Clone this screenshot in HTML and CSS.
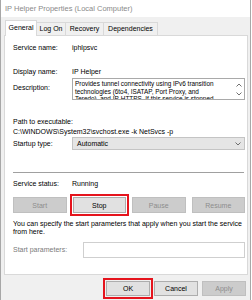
FILE: index.html
```html
<!DOCTYPE html>
<html lang="en">
<head>
  <meta charset="UTF-8" />
  <title>IP Helper Properties (Local Computer)</title>
  <link rel="stylesheet" href="styles.css">
</head>
<body>
  <div class="window">
    <div class="titlebar">IP Helper Properties (Local Computer)</div>

    <div class="dialog">
      <!-- Tabs -->
      <div class="tabs">
        <div class="tab tab-general active">General</div>
        <div class="tab tab-logon">Log On</div>
        <div class="tab tab-recovery">Recovery</div>
        <div class="tab tab-deps">Dependencies</div>
      </div>

      <!-- General page -->
      <div class="panel">
        <div class="row row-name">
          <span class="label">Service name:</span>
          <span class="value">iphlpsvc</span>
        </div>
        <div class="row row-display">
          <span class="label">Display name:</span>
          <span class="value">IP Helper</span>
        </div>
        <div class="row row-desc">
          <span class="label">Description:</span>
          <div class="desc-box">
            <div class="desc-text">Provides tunnel connectivity using IPv6 transition technologies (6to4, ISATAP, Port Proxy, and Teredo), and IP-HTTPS. If this service is stopped, the computer will not have the enhanced connectivity benefits that these technologies offer.</div>
            <div class="desc-scroll">
              <svg width="6" height="4" viewBox="0 0 6 4"><path d="M0.5 3.5 L3 1 L5.5 3.5" fill="none" stroke="#606060" stroke-width="0.9"/></svg>
              <svg width="6" height="4" viewBox="0 0 6 4"><path d="M0.5 0.5 L3 3 L5.5 0.5" fill="none" stroke="#606060" stroke-width="0.9"/></svg>
            </div>
          </div>
        </div>
        <div class="row row-pathlabel">Path to executable:</div>
        <div class="row row-path">C:\WINDOWS\System32\svchost.exe -k NetSvcs -p</div>
        <div class="row row-startup">
          <span class="label">Startup type:</span>
          <div class="combo">
            <span>Automatic</span>
            <svg width="6" height="4" viewBox="0 0 6 4"><path d="M0.5 0.5 L3 3 L5.5 0.5" fill="none" stroke="#606060" stroke-width="0.9"/></svg>
          </div>
        </div>

        <div class="separator"></div>

        <div class="row row-status">
          <span class="label">Service status:</span>
          <span class="value">Running</span>
        </div>
        <div class="service-buttons">
          <button class="btn" disabled>Start</button>
          <button class="btn highlight">Stop</button>
          <button class="btn" disabled>Pause</button>
          <button class="btn" disabled>Resume</button>
        </div>

        <p class="hint">You can specify the start parameters that apply when you start the service<br>from here.</p>

        <div class="row row-params">
          <span class="label disabled">Start parameters:</span>
          <div class="input"></div>
        </div>
      </div>

      <!-- Dialog buttons -->
      <div class="footer">
        <button class="btn btn-dialog highlight">OK</button>
        <button class="btn btn-dialog">Cancel</button>
        <button class="btn btn-dialog" disabled>Apply</button>
      </div>
    </div>
  </div>
</body>
</html>
```

FILE: styles.css
```css
/* Variables & Reset */
:root {
  --face: #f0f0f0;
  --border: #d9d9d9;
  --btn: #e1e1e1;
  --btn-border: #adadad;
  --disabled-bg: #cccccc;
  --disabled-text: #8d8d8d;
  --red: #e5141d;
}
* { margin: 0; padding: 0; box-sizing: border-box; }
body { font-family: 'Liberation Sans', Arial, sans-serif; font-size: 7px; color: #000; background: #fff; }

/* Window */
.window { width: 251px; height: 300px; border-left: 1px solid #a7a7a7; border-right: 1px solid #a7a7a7; background: var(--face); overflow: hidden; }
.titlebar { height: 17px; line-height: 17px; padding-left: 4px; background: #fff; color: #8a8a8a; font-size: 7.5px; white-space: nowrap; }
.dialog { padding: 0 2px 0 3px; }

/* Tabs */
.tabs { height: 18px; display: flex; align-items: flex-end; padding-left: 1px; }
.tab { height: 13px; line-height: 12px; text-align: center; border: 1px solid var(--border); border-bottom: none; background: var(--face); margin-left: -1px; }
.tab:first-child { margin-left: 0; }
.tab.active { height: 16px; line-height: 14px; background: #fff; margin-bottom: -1px; position: relative; z-index: 1; }
.tab-general { width: 32px; }
.tab-logon { width: 30px; }
.tab-recovery { width: 39px; }
.tab-deps { width: 55px; }

/* Panel */
.panel { height: 240px; background: #fff; border: 1px solid var(--border); padding: 0 2px 0 8px; }
.row { display: flex; align-items: center; line-height: 8px; white-space: nowrap; }
.label { width: 59px; flex-shrink: 0; }
.label.disabled { width: 70px; color: #7a7a7a; }

.row-name { margin-top: 8px; }
.row-display { margin-top: 16px; }
.row-desc { margin-top: 2px; align-items: flex-start; }
.row-desc .label { padding-top: 6px; }
.desc-box { flex: 1; height: 22px; border: 1px solid #a9a9a9; display: flex; overflow: hidden; }
.desc-text { flex: 1; padding: 1px 10px 0 2px; font-size: 6.4px; line-height: 7.5px; white-space: normal; overflow: hidden; }
.desc-scroll { width: 11px; display: flex; flex-direction: column; align-items: center; justify-content: space-between; padding: 4px 0 3px; }
.desc-scroll svg { display: block; }
.row-pathlabel { margin-top: 18px; }
.row-path { margin-top: 2px; }
.row-startup { margin-top: 1px; }
.combo { flex: 1; height: 13px; background: #e5e5e5; border: 1px solid #c4c4c4; display: flex; align-items: center; justify-content: space-between; padding: 0 3px 0 4px; }

.separator { height: 1px; background: #a0a0a0; margin: 22px 1px 0 0; }

.row-status { margin-top: 7px; }

/* Buttons */
.service-buttons { display: flex; gap: 6px; margin-top: 9px; }
.service-buttons .btn { flex: 1; }
.btn { height: 16px; font-family: inherit; font-size: 7px; color: #000; background: var(--btn); border: 1px solid var(--btn-border); }
.btn:disabled { background: var(--disabled-bg); border-color: #bfbfbf; color: var(--disabled-text); }
.btn.highlight { outline: 2px solid var(--red); outline-offset: 1px; }

.hint { margin-top: 7px; line-height: 8px; white-space: nowrap; }

.row-params { margin-top: 6px; }
.input { flex: 1; height: 16px; border: 1px solid #cfcfcf; background: #fff; }

/* Footer */
.footer { display: flex; justify-content: flex-end; gap: 4px; padding-right: 2px; margin-top: 6px; }
.btn-dialog { width: 44px; height: 15px; }
```
